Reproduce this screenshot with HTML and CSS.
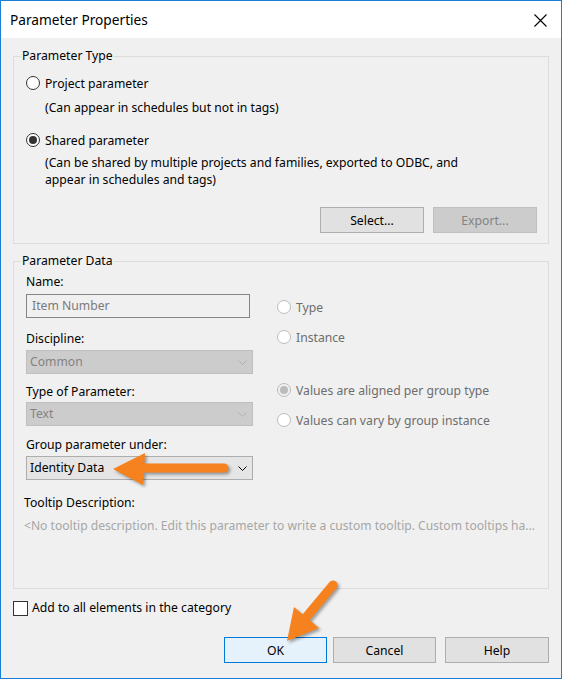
FILE: index.html
```html
<!DOCTYPE html>
<html>
<head>
<meta charset="utf-8">
<title>Parameter Properties</title>
<link rel="stylesheet" href="styles.css">
</head>
<body>
<div class="window">
  <div class="titlebar">
    <span class="title">Parameter Properties</span>
    <svg class="close" width="13" height="13" viewBox="0 0 13 13"><path d="M0.5 0.5 L12.5 12.5 M12.5 0.5 L0.5 12.5" stroke="#000" stroke-width="1.1" fill="none"/></svg>
  </div>
  <div class="content">
    <fieldset class="group group-type">
      <legend>Parameter Type</legend>
      <div class="radio-row r-project"><span class="radio"></span><span>Project parameter</span></div>
      <div class="desc d1">(Can appear in schedules but not in tags)</div>
      <div class="radio-row r-shared"><span class="radio checked"></span><span>Shared parameter</span></div>
      <div class="desc d2">(Can be shared by multiple projects and families, exported to ODBC, and<br>appear in schedules and tags)</div>
      <div class="btn-row">
        <button class="btn">Select...</button>
        <button class="btn disabled">Export...</button>
      </div>
    </fieldset>

    <fieldset class="group group-data">
      <legend>Parameter Data</legend>
      <div class="data-grid">
        <div class="left-col">
          <div class="label l-name">Name:</div>
          <div class="textbox">Item Number</div>
          <div class="label l-disc">Discipline:</div>
          <div class="combo disabled c-disc"><span>Common</span><svg class="chev" width="9" height="5" viewBox="0 0 9 5"><path d="M0.5 0.5 L4.5 4.5 L8.5 0.5" stroke="currentColor" fill="none"/></svg></div>
          <div class="label l-type">Type of Parameter:</div>
          <div class="combo disabled c-type"><span>Text</span><svg class="chev" width="9" height="5" viewBox="0 0 9 5"><path d="M0.5 0.5 L4.5 4.5 L8.5 0.5" stroke="currentColor" fill="none"/></svg></div>
          <div class="label l-group">Group parameter under:</div>
          <div class="combo c-group"><span>Identity Data</span><svg class="chev" width="9" height="5" viewBox="0 0 9 5"><path d="M0.5 0.5 L4.5 4.5 L8.5 0.5" stroke="currentColor" fill="none"/></svg></div>
        </div>
        <div class="right-col">
          <div class="radio-row dis rr-type"><span class="radio"></span><span>Type</span></div>
          <div class="radio-row dis rr-inst"><span class="radio"></span><span>Instance</span></div>
          <div class="radio-row dis rr-aligned"><span class="radio checked"></span><span>Values are aligned per group type</span></div>
          <div class="radio-row dis rr-vary"><span class="radio"></span><span>Values can vary by group instance</span></div>
        </div>
      </div>
      <div class="label l-tooltip">Tooltip Description:</div>
      <div class="tooltip-text">&lt;No tooltip description. Edit this parameter to write a custom tooltip. Custom tooltips ha...</div>
    </fieldset>

    <div class="check-row"><span class="checkbox"></span><span>Add to all elements in the category</span></div>

    <div class="footer">
      <button class="btn primary">OK</button>
      <button class="btn b-cancel">Cancel</button>
      <button class="btn b-help">Help</button>
    </div>
  </div>

  <svg class="arrows" width="562" height="679" viewBox="0 0 562 679">
    <g class="arrow">
      <line x1="224" y1="468" x2="138" y2="468" stroke="#f5821f" stroke-width="9" stroke-linecap="round"/>
      <polygon points="113,469 145,453 143,485" fill="#f5821f"/>
    </g>
    <g class="arrow">
      <line x1="333" y1="585" x2="303" y2="621" stroke="#f5821f" stroke-width="9" stroke-linecap="round"/>
      <polygon points="287,641 294,607 319,628" fill="#f5821f"/>
    </g>
  </svg>
</div>
</body>
</html>
```

FILE: styles.css
```css
* { box-sizing: border-box; }

html, body {
  margin: 0;
  padding: 0;
  background: #f0f0f0;
}

body {
  font-family: "Noto Sans", "Open Sans", sans-serif;
  font-size: 12.2px;
  line-height: 16px;
  color: #000;
}

.window {
  position: relative;
  width: 562px;
  height: 679px;
  border: 1px solid #1a7fd4;
  background: #f0f0f0;
  overflow: hidden;
}

.titlebar {
  height: 37px;
  background: #fff;
  display: flex;
  align-items: center;
  justify-content: space-between;
  padding: 0 14px 0 9px;
}

.title {
  font-size: 13.7px;
  line-height: 18px;
  margin-top: 1px;
}

.close {
  display: block;
  margin-top: 1px;
}

.content {
  padding: 0 12px;
}

.group {
  margin: 10px 0 0;
  padding: 0 0 10px;
  border: 1px solid #dcdcdc;
  min-width: 0;
}

.group legend {
  padding: 0 1px;
  margin-left: 7px;
  line-height: 16px;
}

.group-data {
  margin-top: 9px;
  padding-bottom: 54px;
}

.radio-row {
  display: flex;
  align-items: center;
  gap: 5px;
  height: 16px;
}

.radio-row span:last-child { padding-top: 1px; }

.radio {
  width: 14px;
  height: 14px;
  border: 1px solid #333;
  border-radius: 50%;
  background: #fff;
  display: flex;
  align-items: center;
  justify-content: center;
  flex: none;
}

.radio.checked::after {
  content: "";
  width: 8px;
  height: 8px;
  border-radius: 50%;
  background: #333;
}

.r-project { margin: 11px 0 0 12px; }
.r-shared { margin: 16px 0 0 12px; }

.desc { margin-left: 31px; }
.d1 { margin-top: 9px; }
.d2 { margin-top: 6px; line-height: 17px; }

.btn-row {
  display: flex;
  justify-content: flex-end;
  gap: 9px;
  margin-top: 19px;
  padding-right: 11px;
}

.btn {
  width: 104px;
  height: 26px;
  border: 1px solid #adadad;
  background: #e1e1e1;
  font: inherit;
  color: #000;
  padding: 1px 0 0;
  margin: 0;
}

.btn.disabled {
  background: #cccccc;
  border-color: #bfbfbf;
  color: #838383;
}

.data-grid {
  display: grid;
  grid-template-columns: 227px 1fr;
  column-gap: 24px;
  margin-left: 12px;
}

.label { height: 16px; }
.l-name { margin-top: 5px; }
.l-disc { margin-top: 13px; }
.l-type { margin-top: 10px; }
.l-group { margin-top: 11px; }
.l-tooltip { margin: 15px 0 0 10px; }

.textbox {
  margin-top: 4px;
  width: 224px;
  height: 24px;
  border: 1px solid #858585;
  background: #f0f0f0;
  color: #7a7a7a;
  padding-left: 5px;
  display: flex;
  align-items: center;
}

.combo {
  width: 227px;
  height: 24px;
  border: 1px solid #adadad;
  background: #e5e5e5;
  display: flex;
  align-items: center;
  justify-content: space-between;
  padding: 0 5px 0 3px;
  color: #000;
}

.combo.disabled {
  background: #cccccc;
  border-color: #bfbfbf;
  color: #838383;
}

.combo.disabled .chev { color: #b0b0b0; }
.combo .chev { display: block; }

.c-disc { margin-top: 3px; }
.c-type { margin-top: 2px; }
.c-group { margin-top: 3px; }

.right-col { padding-top: 30px; }
.right-col .radio-row { color: #6d6d6d; }
.right-col .radio { border-color: #bcbcbc; }
.right-col .radio.checked { background: #f0f0f0; }
.right-col .radio.checked::after { background: #bcbcbc; }
.rr-inst { margin-top: 14px; }
.rr-aligned { margin-top: 37px; }
.rr-vary { margin-top: 14px; }

.tooltip-text {
  margin: 7px 0 0 10px;
  color: #a6a6a6;
  font-size: 12.1px;
  white-space: nowrap;
}

.check-row {
  display: flex;
  align-items: center;
  gap: 4px;
  height: 16px;
  margin-top: 11px;
}

.checkbox {
  width: 15px;
  height: 15px;
  border: 1px solid #333;
  background: #fff;
  flex: none;
}

.footer {
  display: flex;
  justify-content: flex-end;
  margin-top: 21px;
}

.footer .btn { width: 103px; }
.footer .b-cancel { margin-left: 6px; }
.footer .b-help { margin-left: 9px; width: 104px; }

.btn.primary {
  background: #e5f1fb;
  border-color: #0078d7;
}

.arrows {
  position: absolute;
  left: -1px;
  top: -1px;
  pointer-events: none;
}

.arrow {
  filter: drop-shadow(2px 2px 1.5px rgba(0, 0, 0, 0.35));
}
```
